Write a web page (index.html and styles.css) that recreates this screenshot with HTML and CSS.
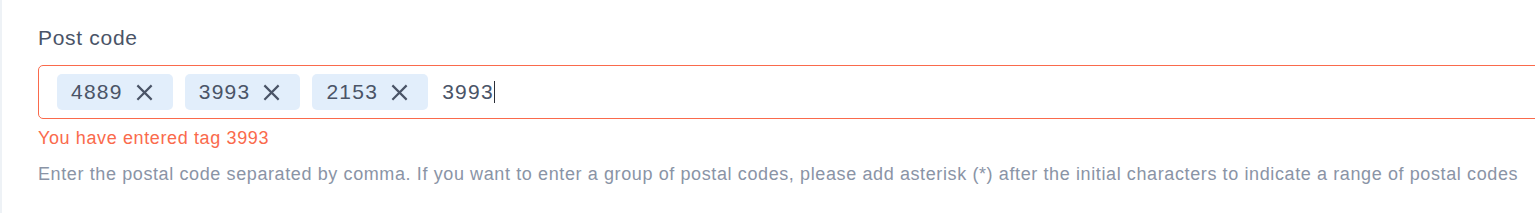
FILE: index.html
```html
<!DOCTYPE html>
<html lang="en">
<head>
<meta charset="utf-8">
<title>Post code</title>
<link rel="stylesheet" href="styles.css">
</head>
<body>
<div class="page">
  <div class="field">
    <label class="label">Post code</label>
    <div class="tag-input">
      <span class="tag"><span class="tag-text">4889</span><svg class="tag-x" viewBox="0 0 16 16"><path d="M2 2L14 14M14 2L2 14"/></svg></span>
      <span class="tag"><span class="tag-text">3993</span><svg class="tag-x" viewBox="0 0 16 16"><path d="M2 2L14 14M14 2L2 14"/></svg></span>
      <span class="tag"><span class="tag-text">2153</span><svg class="tag-x" viewBox="0 0 16 16"><path d="M2 2L14 14M14 2L2 14"/></svg></span>
      <span class="entry">3993<span class="caret"></span></span>
    </div>
    <div class="error">You have entered tag 3993</div>
    <div class="help">Enter the postal code separated by comma. If you want to enter a group of postal codes, please add asterisk (*) after the initial characters to indicate a range of postal codes</div>
  </div>
</div>
</body>
</html>
```

FILE: styles.css
```css
html, body {
  margin: 0;
  padding: 0;
  background: #ffffff;
  overflow: hidden;
}

.page {
  border-left: 2px solid #eef2f6;
  min-height: 213px;
  box-sizing: border-box;
  font-family: "Liberation Sans", Arial, sans-serif;
  color: #4a5467;
}

.field {
  padding: 26px 0 0 36px;
  margin-right: -30px;
}

.label {
  display: block;
  font-size: 21px;
  line-height: 24px;
  letter-spacing: 0.7px;
  color: #4a5467;
}

.tag-input {
  margin-top: 15px;
  height: 54px;
  box-sizing: border-box;
  border: 1px solid #fa6a4c;
  border-radius: 5px;
  padding: 0 0 0 18px;
  display: flex;
  align-items: center;
  gap: 12px;
}

.tag {
  display: flex;
  align-items: center;
  height: 36px;
  padding: 0 20px 0 14px;
  background: #e2eefb;
  border-radius: 5px;
  font-size: 21px;
  line-height: 36px;
  letter-spacing: 1.25px;
}

.tag-x {
  width: 17px;
  height: 17px;
  margin-left: 13px;
  fill: none;
  stroke: #4a5467;
  stroke-width: 2;
  stroke-linecap: square;
}

.entry {
  display: flex;
  align-items: center;
  padding-left: 2px;
  font-size: 21px;
  line-height: 36px;
  letter-spacing: 1.25px;
  color: #4a5467;
}

.caret {
  display: inline-block;
  width: 1px;
  height: 22px;
  margin-left: 0;
  background: #2b2f38;
}

.error {
  margin-top: 7px;
  font-size: 18px;
  line-height: 24px;
  letter-spacing: 0.62px;
  color: #fa6a4c;
}

.help {
  margin-top: 12px;
  font-size: 18px;
  line-height: 24px;
  letter-spacing: 0.61px;
  color: #8a94a6;
  white-space: nowrap;
}
```
